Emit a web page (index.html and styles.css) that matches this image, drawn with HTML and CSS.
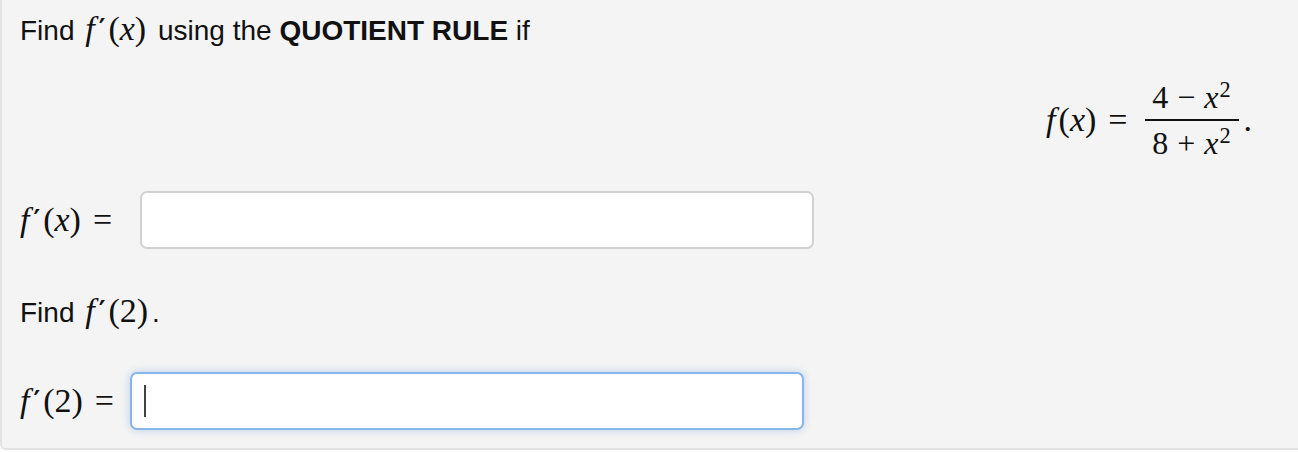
FILE: index.html
```html
<!DOCTYPE html>
<html>
<head>
<meta charset="utf-8">
<link rel="stylesheet" href="styles.css">
</head>
<body>
<div class="panel">
  <p class="line">Find <span class="m"><i>f</i><span class="pr">′</span>(<i>x</i>)</span> using the <b>QUOTIENT RULE</b> if</p>

  <div class="display">
    <span class="m dm"><i>f</i>(<i>x</i>)<span class="rel">=</span></span>
    <span class="frac">
      <span class="num m">4<span class="bin">−</span><i>x</i><sup>2</sup></span>
      <span class="bar"></span>
      <span class="den m">8<span class="bin">+</span><i>x</i><sup>2</sup></span>
    </span>
    <span class="m dot">.</span>
  </div>

  <div class="row row1">
    <span class="label label1 m"><i>f</i><span class="pr">′</span>(<i>x</i>)<span class="rel">=</span></span>
    <div class="box"></div>
  </div>

  <p class="line line2">Find <span class="m"><i>f</i><span class="pr">′</span>(2)</span>.</p>

  <div class="row row2">
    <span class="label label2 m"><i>f</i><span class="pr">′</span>(2)<span class="rel">=</span></span>
    <div class="box box-focus"><span class="caret"></span></div>
  </div>
</div>
</body>
</html>
```

FILE: styles.css
```css
html, body {
  margin: 0;
  padding: 0;
  background: #ffffff;
}

body {
  font-family: "Liberation Sans", Arial, sans-serif;
  color: #111;
}

.panel {
  background: #f4f4f4;
  border-left: 2px solid #e3e3e3;
  border-bottom: 2px solid #e3e3e3;
  border-bottom-left-radius: 6px;
  padding: 11px 46px 18px 18px;
  height: 450px;
  box-sizing: border-box;
}

.line {
  margin: 0;
  font-size: 28px;
  line-height: 40px;
  height: 40px;
  white-space: nowrap;
}

.line b {
  font-weight: 700;
}

.m {
  font-family: "Liberation Serif", "Times New Roman", serif;
  font-size: 34px;
  line-height: 1;
}

.m i {
  font-style: italic;
}

.m i:first-child {
  margin-right: 3px;
}

.line .m {
  margin: 0 4px 0 3px;
}

.pr {
  font-family: "DejaVu Serif", serif;
  font-weight: 700;
  font-size: 0.75em;
  margin: 0 3px 0 1px;
  position: relative;
  top: -0.1em;
}

.rel {
  margin-left: 9px;
}

.label .rel {
  margin-left: 12px;
}

.dm .rel {
  margin-left: 12px;
}

.display {
  margin-top: 24px;
  height: 90px;
  display: flex;
  justify-content: flex-end;
  align-items: center;
}

.dm {
  white-space: nowrap;
  margin-right: 17px;
}

.frac {
  display: flex;
  flex-direction: column;
  align-items: stretch;
  width: 94px;
}

.num, .den {
  display: block;
  text-align: center;
  white-space: nowrap;
  line-height: 34px;
  height: 34px;
  font-size: 32px;
}

.bar {
  display: block;
  height: 1.5px;
  background: #111;
  margin: 5px 0 5.5px;
}

.bin {
  margin: 0 9px;
}

.m sup {
  font-size: 0.7em;
  position: relative;
  top: -0.5em;
  vertical-align: baseline;
  line-height: 0;
  margin-left: 1px;
  font-style: normal;
}

.dot {
  margin-left: 5px;
  align-self: center;
}

.row {
  display: flex;
  align-items: center;
}

.row1 {
  margin-top: 26px;
}

.label {
  white-space: nowrap;
  flex: none;
}

.label1 {
  width: 120px;
}

.label2 {
  width: 110px;
}

.box {
  width: 674px;
  height: 58px;
  box-sizing: border-box;
  background: #ffffff;
  border: 2px solid #d2d2d2;
  border-radius: 7px;
  display: flex;
  align-items: center;
  padding-left: 12px;
}

.box-focus {
  border-color: #88b6ea;
  box-shadow: 0 0 9px rgba(120, 165, 225, 0.45);
}

.caret {
  display: block;
  width: 2px;
  height: 32px;
  background: #444;
}

.line2 {
  margin-top: 44px;
}

.row2 {
  margin-top: 39px;
}
```
